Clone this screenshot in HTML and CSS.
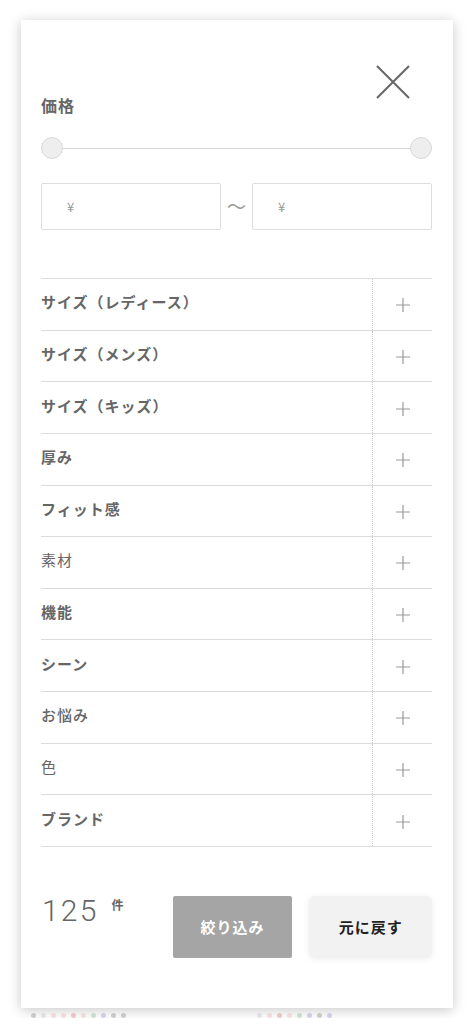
FILE: index.html
```html
<!DOCTYPE html>
<html lang="ja">
<head>
<meta charset="utf-8">
<link rel="stylesheet" href="styles.css">
</head>
<body>
<div class="panel">
  <div class="head">
    <button class="close" aria-label="閉じる">
      <svg width="34" height="34" viewBox="0 0 34 34"><path d="M1 1L33 33M33 1L1 33" stroke="#666" stroke-width="2" fill="none"/></svg>
    </button>
  </div>
  <div class="title">価格</div>
  <div class="slider">
    <span class="knob"></span>
    <span class="track"></span>
    <span class="knob"></span>
  </div>
  <div class="range">
    <div class="field">¥</div>
    <div class="tilde">～</div>
    <div class="field">¥</div>
  </div>
  <ul class="list">
    <li class="row"><span class="label">サイズ（レディース）</span><span class="toggle"><svg class="plus" viewBox="0 0 14 14"><path d="M7 0V14M0 7H14"/></svg></span></li>
    <li class="row"><span class="label">サイズ（メンズ）</span><span class="toggle"><svg class="plus" viewBox="0 0 14 14"><path d="M7 0V14M0 7H14"/></svg></span></li>
    <li class="row"><span class="label">サイズ（キッズ）</span><span class="toggle"><svg class="plus" viewBox="0 0 14 14"><path d="M7 0V14M0 7H14"/></svg></span></li>
    <li class="row"><span class="label">厚み</span><span class="toggle"><svg class="plus" viewBox="0 0 14 14"><path d="M7 0V14M0 7H14"/></svg></span></li>
    <li class="row"><span class="label">フィット感</span><span class="toggle"><svg class="plus" viewBox="0 0 14 14"><path d="M7 0V14M0 7H14"/></svg></span></li>
    <li class="row"><span class="label light">素材</span><span class="toggle"><svg class="plus" viewBox="0 0 14 14"><path d="M7 0V14M0 7H14"/></svg></span></li>
    <li class="row"><span class="label">機能</span><span class="toggle"><svg class="plus" viewBox="0 0 14 14"><path d="M7 0V14M0 7H14"/></svg></span></li>
    <li class="row"><span class="label">シーン</span><span class="toggle"><svg class="plus" viewBox="0 0 14 14"><path d="M7 0V14M0 7H14"/></svg></span></li>
    <li class="row"><span class="label medium">お悩み</span><span class="toggle"><svg class="plus" viewBox="0 0 14 14"><path d="M7 0V14M0 7H14"/></svg></span></li>
    <li class="row"><span class="label light">色</span><span class="toggle"><svg class="plus" viewBox="0 0 14 14"><path d="M7 0V14M0 7H14"/></svg></span></li>
    <li class="row"><span class="label">ブランド</span><span class="toggle"><svg class="plus" viewBox="0 0 14 14"><path d="M7 0V14M0 7H14"/></svg></span></li>
  </ul>
  <div class="foot">
    <div class="count"><span class="num">125</span><span class="unit">件</span></div>
    <button class="btn apply">絞り込み</button>
    <button class="btn reset">元に戻す</button>
  </div>
</div>
<div class="dots">
  <div class="dotgroup">
    <span class="dot c1"></span><span class="dot c2"></span><span class="dot c3"></span><span class="dot c3"></span><span class="dot c4"></span><span class="dot c3"></span><span class="dot c5"></span><span class="dot c6"></span><span class="dot c1"></span><span class="dot c1"></span>
  </div>
  <div class="dotgroup">
    <span class="dot c2"></span><span class="dot c3"></span><span class="dot c4"></span><span class="dot c3"></span><span class="dot c5"></span><span class="dot c6"></span><span class="dot c1"></span><span class="dot c6"></span>
  </div>
</div>
</body>
</html>
```
FILE: styles.css
```css
* { box-sizing: border-box; }
html, body { margin: 0; padding: 0; background: #fff; }
body {
  font-family: "Noto Sans CJK JP", "Noto Sans", sans-serif;
  color: #666;
  padding-top: 20px;
}
.panel {
  margin: 0 21px 0 21px;
  width: 432px;
  height: 988px;
  background: #fff;
  box-shadow: 0 2px 12px rgba(0,0,0,0.22);
  padding: 45px 21px 0 20px;
  display: flex;
  flex-direction: column;
}
.head {
  display: flex;
  justify-content: flex-end;
  height: 34px;
}
.close {
  border: 0;
  background: none;
  padding: 0;
  margin-right: 22px;
  width: 34px;
  height: 34px;
  cursor: pointer;
}
.close svg { display: block; }
.title {
  font-size: 16px;
  font-weight: 700;
  line-height: 20px;
  margin-top: -4px;
  color: #666;
  letter-spacing: 1px;
}
.slider {
  display: flex;
  align-items: center;
  margin-top: 22px;
  height: 22px;
}
.knob {
  width: 22px;
  height: 22px;
  border-radius: 50%;
  background: #eee;
  border: 1px solid #d9d9d9;
  flex: none;
}
.track {
  flex: 1;
  height: 1px;
  background: #d6d6d6;
}
.range {
  display: flex;
  align-items: center;
  margin-top: 24px;
  height: 47px;
}
.field {
  flex: 1;
  height: 47px;
  border: 1px solid #ddd;
  border-radius: 2px;
  padding-left: 25px;
  display: flex;
  align-items: center;
  font-size: 13px;
  color: #999;
}
.tilde {
  width: 31px;
  text-align: center;
  font-size: 19px;
  color: #999;
  line-height: 1;
  padding-bottom: 2px;
}
.list {
  list-style: none;
  margin: 48px 0 0 0;
  padding: 0;
  border-top: 1px solid #dcdcdc;
}
.row {
  display: flex;
  height: 51.64px;
  border-bottom: 1px solid #dcdcdc;
}
.label {
  flex: 1;
  display: flex;
  align-items: center;
  padding-bottom: 5px;
  font-size: 15px;
  font-weight: 700;
  color: #666;
  letter-spacing: 1px;
}
.label.light { font-weight: 400; }
.label.medium { font-weight: 500; }
.toggle {
  width: 60px;
  border-left: 1px dotted #ccc;
  display: flex;
  align-items: center;
  justify-content: center;
  padding-top: 2px;
}
.plus {
  width: 14px;
  height: 14px;
  stroke: #999;
  stroke-width: 1.2;
  fill: none;
}
.foot {
  display: flex;
  align-items: flex-start;
  margin-top: 49px;
}
.count {
  width: 132px;
  display: flex;
  align-items: flex-start;
  padding-left: 1px;
}
.num {
  font-family: Roboto, "Liberation Sans", sans-serif;
  font-weight: 300;
  font-size: 30px;
  line-height: 30px;
  color: #666;
  letter-spacing: 2.2px;
}
.unit {
  font-size: 12px;
  font-weight: 700;
  margin-left: 13px;
  line-height: 14px;
  margin-top: 2px;
}
.btn {
  border: 0;
  height: 62px;
  font-family: "Noto Sans CJK JP", sans-serif;
  font-size: 15px;
  font-weight: 700;
  letter-spacing: 1px;
  border-radius: 2px;
  padding: 0;
}
.apply {
  width: 120px;
  background: #a5a5a5;
  color: #fff;
}
.reset {
  width: 123px;
  margin-left: 17px;
  background: #f2f2f2;
  color: #222;
  box-shadow: 0 1px 6px rgba(0,0,0,0.08);
  border-radius: 6px;
}
.dots {
  display: flex;
  padding: 5px 0 0 31px;
  gap: 131px;
}
.dotgroup { display: flex; gap: 5px; }
.dot {
  width: 5px;
  height: 5px;
  border-radius: 50%;
  opacity: 0.35;
}
.c1 { background: #777; }
.c2 { background: #bbb; }
.c3 { background: #e9a8a8; }
.c4 { background: #d86a6a; }
.c5 { background: #7fb07f; }
.c6 { background: #7d86c9; }
```
